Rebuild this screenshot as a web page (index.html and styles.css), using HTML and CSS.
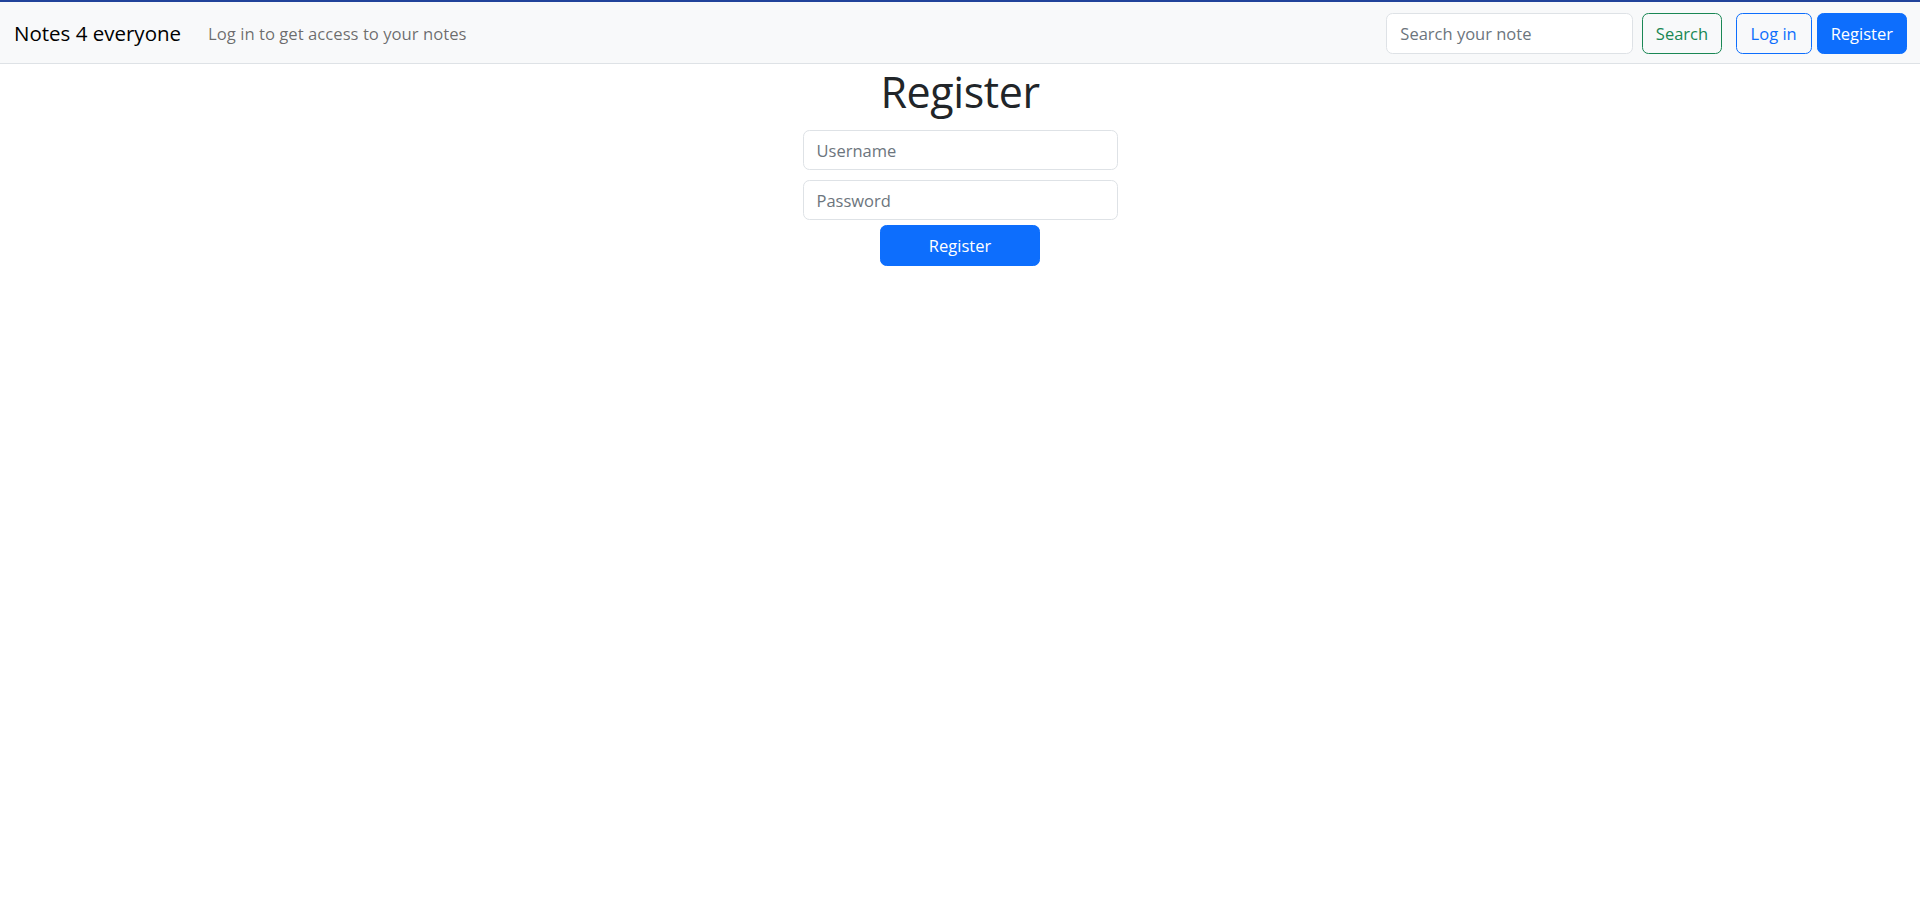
FILE: index.html
```html
<!DOCTYPE html>
<html lang="en">
<head>
<meta charset="utf-8">
<title>Notes 4 everyone - Register</title>
<link rel="stylesheet" href="styles.css">
</head>
<body>
<nav class="navbar">
  <a class="brand" href="#">Notes 4 everyone</a>
  <span class="navbar-text">Log in to get access to your notes</span>
  <div class="nav-right">
    <form class="search-form">
      <input class="control search-input" type="search" placeholder="Search your note">
      <button class="btn btn-outline-success btn-search" type="button">Search</button>
    </form>
    <div class="auth">
      <button class="btn btn-outline-primary btn-login" type="button">Log in</button>
      <button class="btn btn-primary" type="button">Register</button>
    </div>
  </div>
</nav>
<main class="main">
  <h1 class="title">Register</h1>
  <form class="register-form">
    <input class="control field" type="text" placeholder="Username">
    <input class="control field" type="password" placeholder="Password">
    <button class="btn btn-primary submit" type="button">Register</button>
  </form>
</main>
</body>
</html>
```
FILE: styles.css
```css
* { box-sizing: border-box; }
html, body { margin: 0; padding: 0; }
body {
  font-family: "Open Sans", "Noto Sans", sans-serif;
  font-size: 17px;
  color: #212529;
  background: #fff;
}
.navbar {
  display: flex;
  align-items: center;
  height: 64px;
  border-top: 2px solid #21439a;
  border-bottom: 1px solid #dee2e6;
  background: #f8f9fa;
  padding: 1px 13px 0 14px;
}
.brand {
  font-size: 20.5px;
  color: #000;
  text-decoration: none;
  margin-right: 27px;
}
.navbar-text {
  color: rgba(0, 0, 0, 0.58);
  font-size: 16.7px;
}
.nav-right {
  margin-left: auto;
  display: flex;
  align-items: center;
  gap: 14px;
}
.search-form {
  display: flex;
  align-items: center;
  gap: 9px;
  margin: 0;
}
.auth {
  display: flex;
  gap: 5px;
}
.control {
  font-family: inherit;
  font-size: 16.5px;
  height: 41px;
  padding: 0 13px;
  border: 1px solid #dee2e6;
  border-radius: 6.5px;
  background: #fff;
  color: #212529;
  outline: none;
}
.control::placeholder { color: #6c757d; }
.search-input { width: 247px; }
.btn {
  font-family: inherit;
  font-size: 16.5px;
  height: 41px;
  padding: 0 13px;
  border-radius: 6.5px;
  border: 1px solid transparent;
  background: transparent;
  cursor: pointer;
}
.btn-search { padding: 0 12.5px; }
.btn-login { padding: 0 14px; }
.btn-outline-success { color: #198754; border-color: #198754; }
.btn-outline-primary { color: #0d6efd; border-color: #0d6efd; }
.btn-primary { color: #fff; background: #0d6efd; border-color: #0d6efd; }
.main {
  display: flex;
  flex-direction: column;
  align-items: center;
}
.title {
  font-size: 43px;
  font-weight: 400;
  line-height: 56px;
  letter-spacing: -0.4px;
  margin: 0;
  color: #212529;
}
.register-form {
  width: 315px;
  margin-top: 10px;
  display: flex;
  flex-direction: column;
  align-items: center;
}
.field { width: 100%; height: 40px; margin-bottom: 10px; }
.field + .field { margin-bottom: 5px; }
.submit { width: 160px; height: 41px; }
```
